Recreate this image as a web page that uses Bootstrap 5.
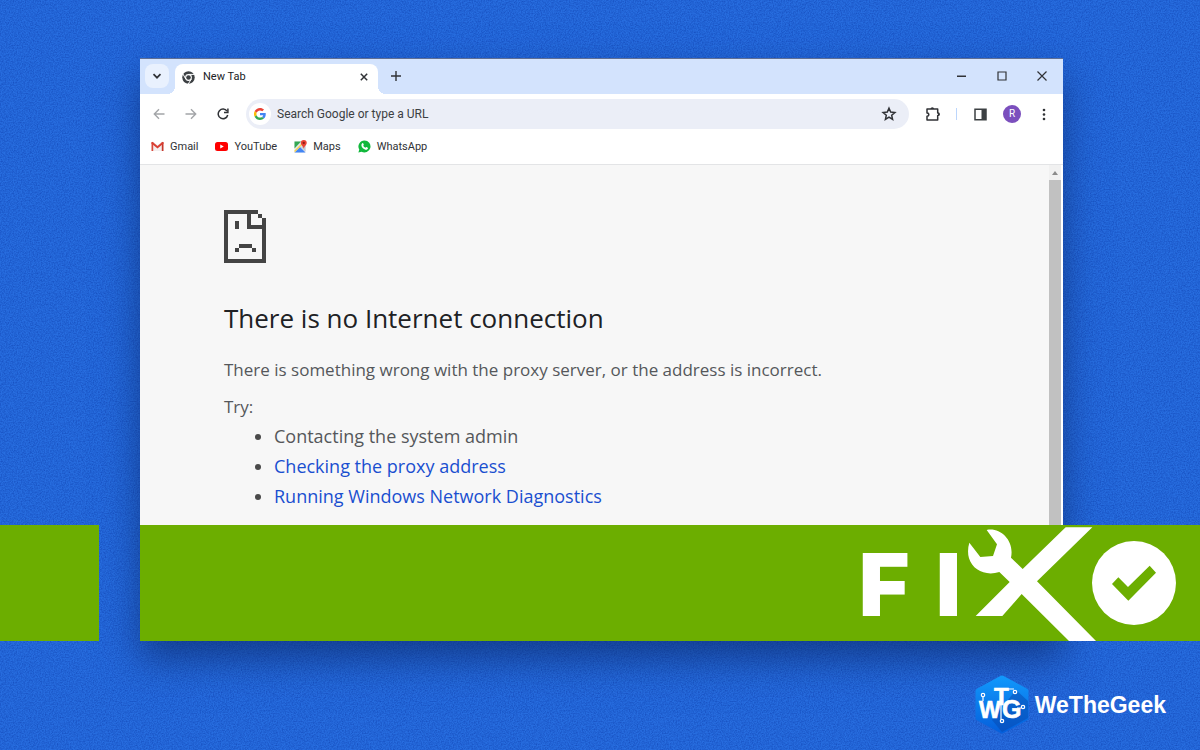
<!DOCTYPE html>
<html lang="en">
<head>
<meta charset="utf-8">
<meta name="viewport" content="width=device-width, initial-scale=1">
<title>Fix: There is no Internet connection</title>
<link href="https://cdn.jsdelivr.net/npm/bootstrap@5.3.0/dist/css/bootstrap.min.css" rel="stylesheet">
<style>
  body {
    font-family: "Open Sans", "Noto Sans", sans-serif;
    background-color: #276ddf;
    background-image: url("data:image/svg+xml,%3Csvg xmlns='http://www.w3.org/2000/svg' width='300' height='300'%3E%3Cfilter id='n' x='0' y='0' width='100%25' height='100%25' color-interpolation-filters='sRGB'%3E%3CfeTurbulence type='fractalNoise' baseFrequency='.75' numOctaves='2' stitchTiles='stitch'/%3E%3CfeColorMatrix values='0 0 0 0 0.07 0 0 0 0 0.28 0 0 0 0 0.72 1.3 0 0 0 -0.42'/%3E%3C/filter%3E%3Crect width='300' height='300' filter='url(%23n)'/%3E%3C/svg%3E");
  }
  svg { display: block; flex-shrink: 0; }
  .stage { padding: 59px 137px 0 140px; }
  .browser {
    min-height: 582px;
    background: #f7f7f7;
    color: #202124;
    box-shadow: 0 -1px 0 #5f6f94, 0 18px 36px rgba(10, 40, 105, .65);
  }
  .browser button { border: 0; background: none; padding: 0; color: #303236; display: flex; align-items: center; justify-content: center; }
  .tabstrip { height: 35px; background: #d3e3fd; padding: 5px 1px 0 5px; }
  .browser .tab-search { width: 24px; height: 24px; border-radius: 8px; background: #e9f1fe; margin-right: 6px; }
  .tab-active { position: relative; width: 203px; height: 30px; background: #fff; border-radius: 8px 8px 0 0; padding: 0 7px 4px; font: 11px/16px Roboto, sans-serif; }
  .tab-active::before, .tab-active::after { content: ""; position: absolute; bottom: 0; width: 8px; height: 8px; }
  .tab-active::before { right: 100%; background: radial-gradient(circle at 0 0, transparent 8px, #fff 8px); }
  .tab-active::after { left: 100%; background: radial-gradient(circle at 100% 0, transparent 8px, #fff 8px); }
  .browser .tab-close { width: 14px; height: 14px; }
  .browser .tab-new { width: 36px; height: 24px; }
  .browser .win-btn { width: 40px; height: 24px; }
  .toolbar { height: 40px; padding: 0 3px; background: #fff; }
  .browser .tool-btn { width: 32px; height: 32px; }
  .omnibox { height: 30px; border-radius: 15px; background: #ebeef7; margin: 0 8px 0 7px; padding: 0 12px 0 3px; }
  .omnibox input { border: 0; outline: 0; background: transparent; min-width: 0; padding: 0 0 0 6px; font: 12px/20px Roboto, sans-serif; color: #3c4043; }
  .omnibox input::placeholder { color: #3c4043; opacity: 1; }
  .g-chip { width: 22px; height: 22px; background: #fff; }
  .divider { width: 1px; height: 12px; margin: 0 7px; background: #bcd6fc; }
  .avatar { width: 18px; height: 18px; background: #7b4fbd; color: #fff; font: 10px/18px Roboto, sans-serif; }
  .bookmarks { height: 31px; gap: 17px; padding: 0 11px 5px; background: #fff; border-bottom: 1px solid #e3e4e6; font: 11px/16px Roboto, sans-serif; }
  .bookmarks a { gap: 6px; color: #303236; }
  .error-page { padding: 45px 40px 0 84px; color: #55575b; font-size: 17px; line-height: 30px; }
  .error-page h1 { font-size: 26px; line-height: 36px; font-weight: 400; color: #202124; margin: 36px 0 19px; }
  .error-page p { margin: 0 0 7px; }
  .try-label { line-height: 29px; }
  .error-page ul { margin: 0; padding-left: 50px; }
  .error-page li { font-size: 18px; }
  .error-page li::marker { color: #4a4a4a; }
  .error-page a { color: #1a4fd0; text-decoration: none; }
  .scroll-track { width: 14px; padding: 0 2px 0 0; background: #fff; }
  .scroll-track .arrow { height: 15px; background: #f1f1f1; }
  .scroll-track .thumb { background: #c1c1c1; }
  .banner { position: relative; margin-top: -116px; height: 116px; gap: 41px; }
  .green { background: #6cae00; }
  .green-stub { width: 99px; }
  .fix-mark { padding-right: 24px; }
  .fix-word { font: 900 87px/116px Inter, "Liberation Sans", sans-serif; color: #fff; gap: 26px; margin-right: 7px; padding-top: 4px; }
  .check-mark { margin-left: -4px; }
  .brand-row { padding: 34px 34px 16px; gap: 6px; }
  .brand-name { font: 700 23px/30px "Liberation Sans", sans-serif; color: #fff; }
</style>
</head>
<body>
<main class="stage">
  <section class="browser d-flex flex-column">
    <div class="tabstrip d-flex align-items-start">
      <button class="tab-search" aria-label="Search tabs"><svg width="10" height="10" viewBox="0 0 10 10" fill="none" stroke="currentColor" stroke-width="1.7"><path d="M1.5 3.2 5 6.7l3.500-3.500"/></svg></button>
      <div class="tab-active d-flex align-items-center">
        <svg width="13" height="13" viewBox="0 0 26 26"><circle cx="13" cy="13" r="12.500" fill="#3c4043"/><circle cx="13" cy="13" r="6.800" fill="#fff"/><circle cx="13" cy="13" r="4.600" fill="#3c4043"/><path d="M13 6.800H25M7.500 16 1.800 5.800M18.600 16l-6 10" stroke="#fff" stroke-width="2"/></svg>
        <span class="flex-grow-1 ps-2">New Tab</span>
        <button class="tab-close" aria-label="Close tab"><svg width="8" height="8" viewBox="0 0 8 8" stroke="currentColor" stroke-width="1.500"><path d="m.8.8 6.400 6.400M7.200.8.8 7.200"/></svg></button>
      </div>
      <button class="tab-new" aria-label="New tab"><svg width="10" height="10" viewBox="0 0 10 10" stroke="currentColor" stroke-width="1.400"><path d="M5 0v10M0 5h10"/></svg></button>
      <div class="d-flex ms-auto">
        <button class="win-btn" aria-label="Minimize"><svg width="10" height="10" viewBox="0 0 10 10"><path d="M0 4.500h9v1.500H0z" fill="#303236"/></svg></button>
        <button class="win-btn" aria-label="Maximize"><svg width="10" height="10" viewBox="0 0 10 10" fill="none" stroke="currentColor" stroke-width="1.200"><path d="M1 1h8v8H1z"/></svg></button>
        <button class="win-btn" aria-label="Close"><svg width="10" height="10" viewBox="0 0 10 10" stroke="currentColor" stroke-width="1.200"><path d="m.5.5 9 9M9.500.5l-9 9"/></svg></button>
      </div>
    </div>

    <div class="toolbar d-flex align-items-center">
      <button class="tool-btn" aria-label="Back"><svg width="12" height="12" viewBox="0 0 12 12" fill="none" stroke="#a3a5a8" stroke-width="1.400"><path d="M11.500 6H1.500M6 1.300 1.300 6 6 10.700"/></svg></button>
      <button class="tool-btn" aria-label="Forward"><svg width="12" height="12" viewBox="0 0 12 12" fill="none" stroke="#a3a5a8" stroke-width="1.400"><path d="M.5 6h10M6 1.300 10.700 6 6 10.700"/></svg></button>
      <button class="tool-btn" aria-label="Reload"><svg width="12" height="12" viewBox="0 0 12 12" fill="none" stroke="currentColor" stroke-width="1.500"><path d="M10 3.200A4.800 4.800 0 1 0 10.700 7"/><path d="M10.900.6v3.900H7" /></svg></button>
      <div class="omnibox d-flex align-items-center flex-grow-1">
        <span class="g-chip rounded-circle d-flex align-items-center justify-content-center"><svg width="12" height="12" viewBox="0 0 48 48"><path fill="#ea4335" d="M24 9.500c3.540 0 6.710 1.220 9.210 3.600l6.850-6.850C35.900 2.380 30.470 0 24 0 14.620 0 6.510 5.380 2.560 13.220l7.980 6.190C12.430 13.720 17.740 9.500 24 9.500z"/><path fill="#4285f4" d="M46.980 24.550c0-1.570-.15-3.090-.38-4.550H24v9.020h12.940c-.58 2.960-2.260 5.480-4.780 7.180l7.730 6c4.510-4.180 7.090-10.360 7.090-17.650z"/><path fill="#fbbc05" d="M10.530 28.590a14.500 14.500 0 0 1 0-9.180l-7.980-6.190a24 24 0 0 0 0 21.560z"/><path fill="#34a853" d="M24 48c6.480 0 11.930-2.130 15.890-5.810l-7.730-6c-2.150 1.450-4.920 2.300-8.160 2.300-6.260 0-11.570-4.220-13.470-9.910l-7.980 6.190C6.510 42.620 14.620 48 24 48z"/></svg></span>
        <input class="flex-grow-1" type="text" aria-label="Address and search bar" placeholder="Search Google or type a URL">
        <button aria-label="Bookmark this tab"><svg width="16" height="16" viewBox="0 0 16 16" fill="none" stroke="currentColor" stroke-width="1.500"><path d="m8 2.200 1.700 3.900 4.200.4-3.200 2.800.9 4.100L8 11.200l-3.600 2.200.9-4.100-3.200-2.800 4.200-.4z"/></svg></button>
      </div>
      <button class="tool-btn" aria-label="Extensions"><svg width="16" height="16" viewBox="0 0 16 16"><path d="M2 3h10.700v4c2 0 2 2.600 0 2.600V14H2v-3.700c2.400 0 2.400-3.400 0-3.400z" fill="none" stroke="#303236" stroke-width="1.500" stroke-linejoin="round"/><path d="M5.500 3a1.800 1.800 0 0 1 3.600 0zM13 6.500a1.800 1.800 0 0 1 0 3.500z" fill="#303236"/></svg></button>
      <span class="divider"></span>
      <button class="tool-btn" aria-label="Side panel"><svg width="13" height="13" viewBox="0 0 13 13"><path d="M1 1.200h11v10.600H1z" fill="none" stroke="#3c4043" stroke-width="1.500"/><path d="M7.500 1H12v11H7.500z" fill="#3c4043"/></svg></button>
      <button class="tool-btn" aria-label="Profile"><span class="avatar rounded-circle">R</span></button>
      <button class="tool-btn" aria-label="Menu"><svg width="4" height="13" viewBox="0 0 4 13" fill="#303236"><circle cx="2" cy="2" r="1.300"/><circle cx="2" cy="6.500" r="1.300"/><circle cx="2" cy="11" r="1.300"/></svg></button>
    </div>

    <nav class="bookmarks d-flex align-items-center" aria-label="Bookmarks">
      <a href="#" class="d-flex align-items-center text-decoration-none"><svg width="13" height="13" viewBox="0 0 26 26"><path d="M1 4h4v18H1z" fill="#d8493c"/><path d="M21 4h4v18h-4z" fill="#c5382d"/><path d="M5 4v18h16V4l-8 6z" fill="#f3efef"/><path d="m1.500 5 11.500 9.500L24.500 5" fill="none" stroke="#d93f33" stroke-width="4"/></svg>Gmail</a>
      <a href="#" class="d-flex align-items-center text-decoration-none"><svg width="13" height="13" viewBox="0 0 26 26"><rect y="4" width="26" height="18" rx="5" fill="#f00"/><path d="m10.500 9 7 4-7 4z" fill="#fff"/></svg>YouTube</a>
      <a href="#" class="d-flex align-items-center text-decoration-none"><svg width="13" height="13" viewBox="0 0 26 26"><path d="M1 3h22v22H1z" fill="#e5e7eb"/><path d="M1 3h13L1 17z" fill="#34a853"/><path d="m1 25 11-11 11 11z" fill="#4285f4"/><path d="M1 21 19 3h4L1 25z" fill="#fbd34d"/><path d="M14 14l9-5v14z" fill="#c4c8cd"/><path d="M19.500 0a6 6 0 0 1 6 6c0 4-4.500 5.500-6 11-1.500-5.500-6-7-6-11a6 6 0 0 1 6-6z" fill="#ea4335"/><circle cx="19.500" cy="6" r="2.300" fill="#8f1d14"/></svg>Maps</a>
      <a href="#" class="d-flex align-items-center text-decoration-none"><svg width="13" height="13" viewBox="0 0 26 26"><path d="M13 1a12 12 0 1 1-6 22.400L.8 25l1.700-6A12 12 0 0 1 13 1z" fill="#12b83c"/><path d="M8.600 6.500c1-.6 1.800-.3 2.200.8l.8 2.200c.2.700-1 1.600-1.200 2 1 2 2.500 3.400 4.600 4.200.6-.4 1.300-1.800 2-1.500l2.600 1.300c.9.500-.1 3.500-2.200 3.900-5 .6-10.800-5-10.600-9.500 0-1.500.7-2.700 1.800-3.400z" fill="#fff"/></svg>WhatsApp</a>
    </nav>

    <div class="d-flex flex-grow-1">
      <article class="error-page flex-grow-1">
        <svg width="42" height="54" viewBox="0 0 42 54" fill="#444" shape-rendering="crispEdges"><path d="M0 0h34v4H0zM0 0h4v53H0zM0 49h42v4H0zM38 8h4v45h-4zM34 4h4v4h-4zM23 4h4v15h-4zM23 15h19v4H23zM11 11h4v8h-4zM15 34h13v4H15zM11 38h4v4h-4zM28 38h4v4h-4z"/></svg>
        <h1>There is no Internet connection</h1>
        <p>There is something wrong with the proxy server, or the address is incorrect.</p>
        <div class="try-label">Try:</div>
        <ul>
          <li>Contacting the system admin</li>
          <li><a href="#">Checking the proxy address</a></li>
          <li><a href="#">Running Windows Network Diagnostics</a></li>
        </ul>
      </article>
      <div class="scroll-track d-flex flex-column">
        <div class="arrow d-flex align-items-center justify-content-center"><svg width="6" height="4" viewBox="0 0 6 4"><path d="m0 4 3-4 3 4z" fill="#8b8b8b"/></svg></div>
        <div class="thumb flex-grow-1"></div>
      </div>
    </div>
  </section>
</main>

<section class="banner d-flex">
  <div class="green green-stub"></div>
  <div class="green fix-mark flex-grow-1 d-flex align-items-center justify-content-end">
    <div class="fix-word d-flex"><span>F</span><span>I</span></div>
    <svg width="128" height="116" viewBox="384 30 384 348" role="img" aria-label="X" fill="#fff"><path d="M677 37h80L591 199l177 179h-81L545 237l-58 66h-80l102-102-31-30C438 184 398 166 387 130c-4-14-4-31 1-47l33 43 38-3 12-35-31-43c41-9 84 32 73 83l35 34z"/></svg>
    <svg class="check-mark" width="84" height="84" viewBox="0 0 252 252" role="img" aria-label="Fixed"><circle cx="126" cy="126" r="126" fill="#fff"/><path d="m60 129 19-20 29 29 65-64 19 21-83 84z" fill="#6cae00"/></svg>
  </div>
</section>

<footer class="brand-row d-flex align-items-center justify-content-end">
  <svg width="54" height="59" viewBox="0 0 54 59" role="img" aria-label="WTG">
    <defs><linearGradient id="hex" x1="0" y1="0" x2="0" y2="1"><stop offset="0" stop-color="#1197fb"/><stop offset="1" stop-color="#0560dc"/></linearGradient></defs>
    <path d="M27 3 51 16v27L27 56 3 43V16z" fill="url(#hex)" stroke="url(#hex)" stroke-width="5" stroke-linejoin="round"/>
    <path d="m17 45 24-30 12 11v17L27 57z" fill="#0748ad" opacity=".5"/>
    <text fill="#fff" stroke="#fff" stroke-width=".6" font-family="Liberation Sans, sans-serif" font-weight="700" font-size="23"><tspan x="4" y="43">W</tspan><tspan x="19" y="30" font-size="24">T</tspan><tspan x="27" y="43" font-size="25">G</tspan></text>
    <g fill="#0b6fe6" stroke="#fff" stroke-width="1.200"><path d="M8 22v4M32 14h7M42 33h4M26 29v15"/><circle cx="8" cy="20" r="1.700"/><circle cx="40" cy="17" r="1.700"/><circle cx="48" cy="32" r="1.700"/><circle cx="27" cy="46" r="1.700"/></g>
  </svg>
  <span class="brand-name">WeTheGeek</span>
</footer>
<script src="https://cdn.jsdelivr.net/npm/bootstrap@5.3.0/dist/js/bootstrap.bundle.min.js"></script>
</body>
</html>
